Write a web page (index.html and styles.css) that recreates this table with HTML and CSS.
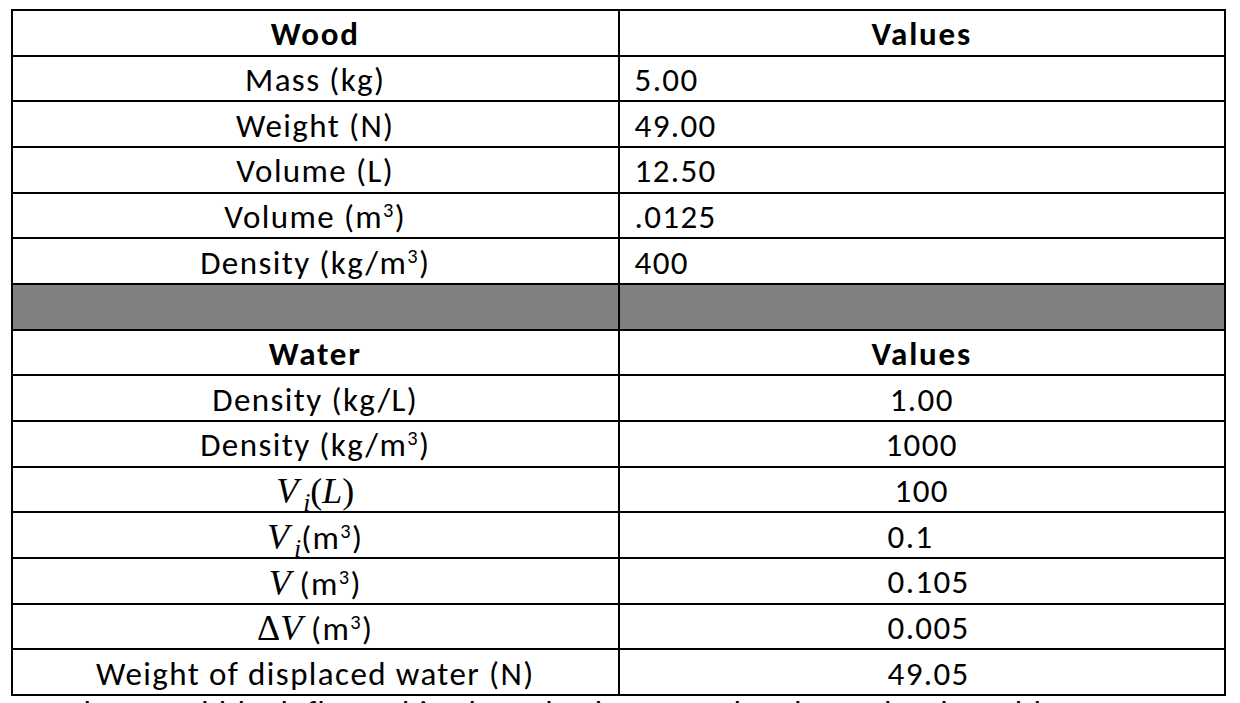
FILE: index.html
```html
<!DOCTYPE html>
<html>
<head>
<meta charset="utf-8">
<link rel="stylesheet" href="styles.css">
</head>
<body>
<table class="data">
  <tr class="head"><td>Wood</td><td>Values</td></tr>
  <tr><td>Mass (kg)</td><td class="left">5.00</td></tr>
  <tr><td>Weight (N)</td><td class="left">49.00</td></tr>
  <tr><td>Volume (L)</td><td class="left">12.50</td></tr>
  <tr><td>Volume (m<sup>3</sup>)</td><td class="left">.0125</td></tr>
  <tr><td>Density (kg/m<sup>3</sup>)</td><td class="left">400</td></tr>
  <tr class="gap"><td></td><td></td></tr>
  <tr class="head"><td>Water</td><td>Values</td></tr>
  <tr><td>Density (kg/L)</td><td>1.00</td></tr>
  <tr><td>Density (kg/m<sup>3</sup>)</td><td>1000</td></tr>
  <tr><td><span class="m">V<sub>i</sub></span><span class="m up">(</span><span class="m">L</span><span class="m up">)</span></td><td>100</td></tr>
  <tr><td><span class="m">V<sub>i</sub></span>(m<sup>3</sup>)</td><td class="indent">0.1</td></tr>
  <tr><td><span class="m">V</span> (m<sup>3</sup>)</td><td class="indent">0.105</td></tr>
  <tr><td><span class="m up">Δ</span><span class="m">V</span> (m<sup>3</sup>)</td><td class="indent">0.005</td></tr>
  <tr><td>Weight of displaced water (N)</td><td class="indent">49.05</td></tr>
</table>
<p class="caption">the wood block floated in the tub, the water level rose by the table</p>
</body>
</html>
```
FILE: styles.css
```css
html, body {
  margin: 0;
  padding: 0;
  background: #ffffff;
  overflow: hidden;
}
body {
  padding: 9px 0 0 11px;
  font-family: Carlito, Lato, "Open Sans", sans-serif;
  color: #000;
}
.data {
  border-collapse: collapse;
  width: 1215px;
  table-layout: fixed;
}
.data td {
  border: 2px solid #000;
  height: 45.67px;
  padding: 4px 0 0 0;
  box-sizing: border-box;
  font-size: 33px;
  letter-spacing: 1.4px;
  line-height: 1;
  text-align: center;
  vertical-align: middle;
  white-space: nowrap;
}
.data td.left {
  text-align: left;
  padding-left: 15px;
}
.data td.indent {
  text-align: left;
  padding-left: 268px;
}
.head td {
  font-weight: bold;
  letter-spacing: 1.8px;
}
.gap td {
  background: #808080;
}
sup {
  font-size: 0.62em;
  line-height: 0;
  vertical-align: 0.55em;
}
.m {
  font-family: "Liberation Serif", "DejaVu Serif", serif;
  font-style: italic;
  font-size: 36px;
  letter-spacing: 0;
}
.m.up {
  font-style: normal;
}
.m sub {
  font-size: 0.72em;
  line-height: 0;
  vertical-align: -0.3em;
  padding-left: 5px;
}
.caption {
  margin: -2px 0 0 60px;
  font-size: 33px;
  letter-spacing: 1.4px;
  line-height: 1.2;
  white-space: nowrap;
}
```
